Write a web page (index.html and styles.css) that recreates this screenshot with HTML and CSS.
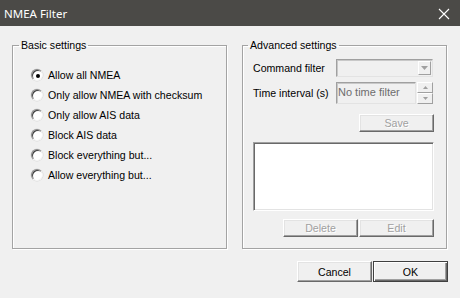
FILE: index.html
```html
<!doctype html>
<html lang="en">
<head>
    <title>NMEA Filter</title>
    <link rel="stylesheet" href="styles.css">
</head>
<body>
    <div class="window">
        <div class="titlebar">
            <span class="title">NMEA Filter</span>
            <span class="close">
                <svg width="12" height="12" viewBox="0 0 12 12">
                    <path d="M1 1 L11 11 M11 1 L1 11" stroke="#fff" stroke-width="1.1" fill="none"/>
                </svg>
            </span>
        </div>

        <div class="client">
            <div class="groups">

                <fieldset class="group basic">
                    <legend>Basic settings</legend>
                    <div class="group-body">
                        <label class="radio-row"><span class="radio checked"></span>Allow all NMEA</label>
                        <label class="radio-row"><span class="radio"></span>Only allow NMEA with checksum</label>
                        <label class="radio-row"><span class="radio"></span>Only allow AIS data</label>
                        <label class="radio-row"><span class="radio"></span>Block AIS data</label>
                        <label class="radio-row"><span class="radio"></span>Block everything but...</label>
                        <label class="radio-row"><span class="radio"></span>Allow everything but...</label>
                    </div>
                </fieldset>

                <fieldset class="group advanced">
                    <legend>Advanced settings</legend>
                    <div class="group-body">

                        <div class="field-row row-combo">
                            <span class="field-label">Command filter</span>
                            <div class="combo">
                                <span class="combo-btn">
                                    <svg width="7" height="4" viewBox="0 0 7 4"><path d="M0 0 H7 L3.5 4 Z" fill="#a0a0a0"/></svg>
                                </span>
                            </div>
                        </div>

                        <div class="field-row row-time">
                            <span class="field-label">Time interval (s)</span>
                            <div class="edit">No time filter</div>
                            <div class="spin">
                                <span class="spin-btn">
                                    <svg width="5" height="3" viewBox="0 0 5 3"><path d="M0 3 H5 L2.5 0 Z" fill="#a0a0a0"/></svg>
                                </span>
                                <span class="spin-btn">
                                    <svg width="5" height="3" viewBox="0 0 5 3"><path d="M0 0 H5 L2.5 3 Z" fill="#a0a0a0"/></svg>
                                </span>
                            </div>
                        </div>

                        <div class="btn-row row-save">
                            <button class="btn" disabled>Save</button>
                        </div>

                        <div class="listbox"></div>

                        <div class="btn-row row-edit">
                            <button class="btn" disabled>Delete</button>
                            <button class="btn" disabled>Edit</button>
                        </div>
                    </div>
                </fieldset>

            </div>

            <div class="dialog-buttons">
                <button class="btn">Cancel</button>
                <button class="btn default">OK</button>
            </div>
        </div>
    </div>
</body>
</html>
```

FILE: styles.css
```css
* {
    box-sizing: border-box;
}

body {
    margin: 0;
    background: #f0f0f0;
    font: normal 10.6px "Liberation Sans", Arial, sans-serif;
    color: #000;
}

.window {
    width: 460px;
    height: 298px;
    background: #f0f0f0;
}

/* title bar */

.titlebar {
    height: 26px;
    background: #4b4a47;
    display: flex;
    align-items: center;
    justify-content: space-between;
    padding: 0 10px 0 4px;
}

.title {
    color: #fff;
    font: normal 11.5px "Noto Sans", sans-serif;
}

.close {
    display: flex;
    margin-top: 1px;
}

/* client area */

.client {
    padding: 12px 12px 0 12px;
}

.groups {
    display: flex;
    gap: 15px;
    height: 211px;
}

.group {
    margin: 0;
    padding: 0;
    border: 1px solid #a3a3a3;
    box-shadow: 1px 1px 0 #fff, inset 1px 1px 0 #fff;
    min-width: 0;
}

.group legend {
    margin-left: 6px;
    padding: 0 2px;
    line-height: 14px;
}

.basic {
    width: 215px;
}

.basic .group-body {
    padding: 13px 0 0 18px;
    display: flex;
    flex-direction: column;
}

.advanced {
    width: 205px;
}

.advanced .group-body {
    padding: 7px 12px 0 10px;
}

.advanced legend {
    margin-left: 5px;
}

/* radio buttons */

.radio-row {
    display: flex;
    align-items: center;
    gap: 5px;
    height: 20px;
}

.radio {
    width: 12px;
    height: 12px;
    border-radius: 50%;
    background: #fff;
    border: 1px solid;
    border-color: #8a8a8a #f4f4f4 #f4f4f4 #8a8a8a;
    box-shadow: inset 1px 1px 0 #404040, 0 0 0 0.5px #d8d8d8;
    display: flex;
    align-items: center;
    justify-content: center;
}

.radio.checked::after {
    content: "";
    width: 4px;
    height: 4px;
    border-radius: 50%;
    background: #000;
    margin: 1px 0 0 1px;
}

/* advanced fields */

.field-row {
    display: flex;
    align-items: center;
}

.field-label {
    width: 83px;
}

.row-combo {
    height: 18px;
}

.row-time {
    height: 22px;
    margin-top: 5px;
}

.combo {
    width: 97px;
    height: 18px;
    border: 1px solid;
    border-color: #a0a0a0 #e3e3e3 #e3e3e3 #a0a0a0;
    box-shadow: inset 1px 1px 0 #c8c8c8;
    display: flex;
    justify-content: flex-end;
    align-items: center;
    padding-right: 1px;
}

.combo-btn {
    width: 13px;
    height: 14px;
    border: 1px solid;
    border-color: #fff #a0a0a0 #a0a0a0 #fff;
    display: flex;
    align-items: center;
    justify-content: center;
}

.edit {
    width: 80px;
    height: 22px;
    border: 1px solid;
    border-color: #a0a0a0 #e3e3e3 #e3e3e3 #a0a0a0;
    box-shadow: inset 1px 1px 0 #c8c8c8;
    color: #6d6d6d;
    padding: 3px 0 0 1px;
    font-size: 11px;
}

.spin {
    margin-left: 1px;
    width: 16px;
    height: 22px;
    display: flex;
    flex-direction: column;
}

.spin-btn {
    flex: 1;
    border: 1px solid;
    border-color: #fff #a0a0a0 #a0a0a0 #fff;
    display: flex;
    align-items: center;
    justify-content: center;
}

/* buttons */

.btn-row {
    display: flex;
    justify-content: flex-end;
    gap: 1px;
}

.row-save {
    margin-top: 10px;
}

.row-edit {
    margin-top: 8px;
}

.btn {
    width: 75px;
    height: 18px;
    padding: 0;
    background: #f0f0f0;
    font: inherit;
    color: #000;
    border: 1px solid;
    border-color: #fff #696969 #696969 #fff;
    box-shadow: inset -1px -1px 0 #a0a0a0, inset 1px 1px 0 #e3e3e3;
}

.btn:disabled {
    color: #a0a0a0;
    text-shadow: 1px 1px 0 #fff;
}

.listbox {
    margin-top: 10px;
    height: 69px;
    background: #fff;
    border: 1px solid;
    border-color: #a0a0a0 #fff #fff #a0a0a0;
    box-shadow: inset 1px 1px 0 #696969, inset -1px -1px 0 #e3e3e3;
}

.dialog-buttons {
    display: flex;
    justify-content: flex-end;
    gap: 1px;
    margin-top: 12px;
}

.dialog-buttons .btn {
    height: 21px;
}

.btn.default {
    border: 1px solid #404040;
    box-shadow: inset 1px 1px 0 #fff, inset -1px -1px 0 #696969, inset -2px -2px 0 #a0a0a0;
}
```
